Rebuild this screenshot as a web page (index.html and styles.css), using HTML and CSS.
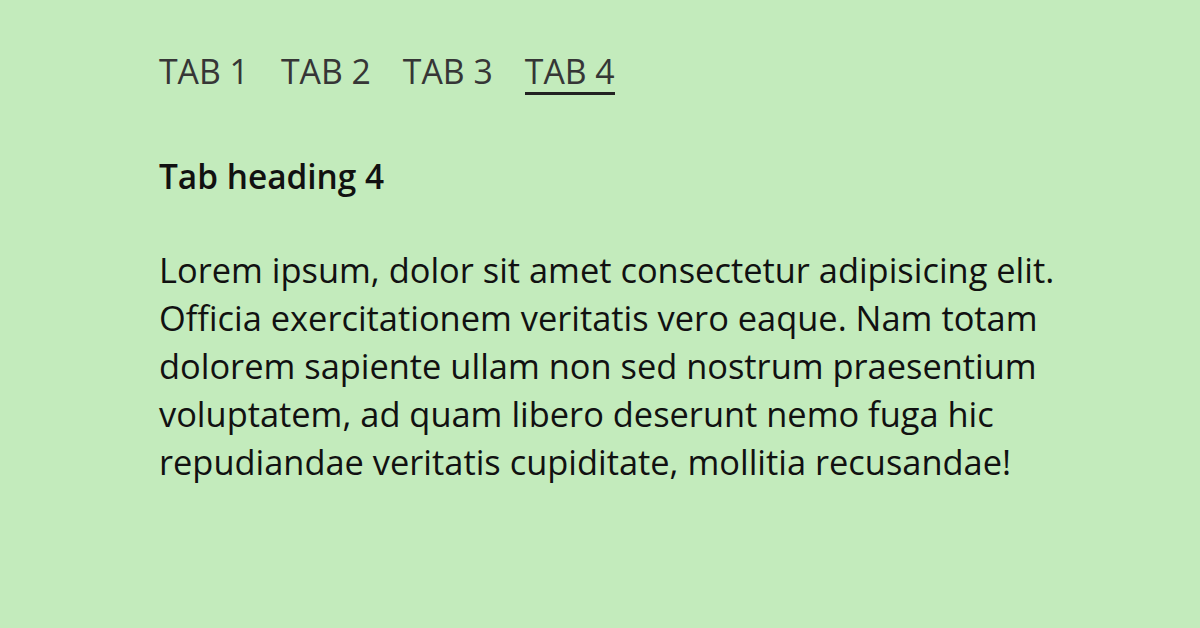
FILE: index.html
```html
<!DOCTYPE html>
<html lang="en">
<head>
<meta charset="utf-8">
<title>Tabs</title>
<link rel="stylesheet" href="styles.css">
</head>
<body>
<main class="tabs">
  <nav class="tab-list">
    <a class="tab">TAB 1</a>
    <a class="tab">TAB 2</a>
    <a class="tab">TAB 3</a>
    <a class="tab active">TAB 4</a>
  </nav>
  <section class="panel">
    <h2 class="panel-title">Tab heading 4</h2>
    <p class="panel-text">Lorem ipsum, dolor sit amet consectetur adipisicing elit. Officia exercitationem veritatis vero eaque. Nam totam dolorem sapiente ullam non sed nostrum praesentium voluptatem, ad quam libero deserunt nemo fuga hic repudiandae veritatis cupiditate, mollitia recusandae!</p>
  </section>
</main>
</body>
</html>
```

FILE: styles.css
```css
html, body {
  margin: 0;
  padding: 0;
}
body {
  background: #c3ebbc;
  font-family: "Open Sans", "Liberation Sans", sans-serif;
  width: 1200px;
  height: 628px;
  overflow: hidden;
}
.tabs {
  padding: 51px 0 0 159px;
  width: 960px;
}
.tab-list {
  display: flex;
  gap: 32px;
}
.tab {
  font-size: 33.8px;
  line-height: 40px;
  color: #363636;
  padding-bottom: 1px;
  border-bottom: 3px solid transparent;
}
.tab.active {
  border-bottom-color: #222;
}
.panel-title {
  margin: 58px 0 0;
  font-size: 33.4px;
  line-height: normal;
  font-weight: 600;
  color: #111;
}
.panel-text {
  margin: 47px 0 0;
  font-size: 34.4px;
  line-height: 48px;
  color: #111;
}
```
